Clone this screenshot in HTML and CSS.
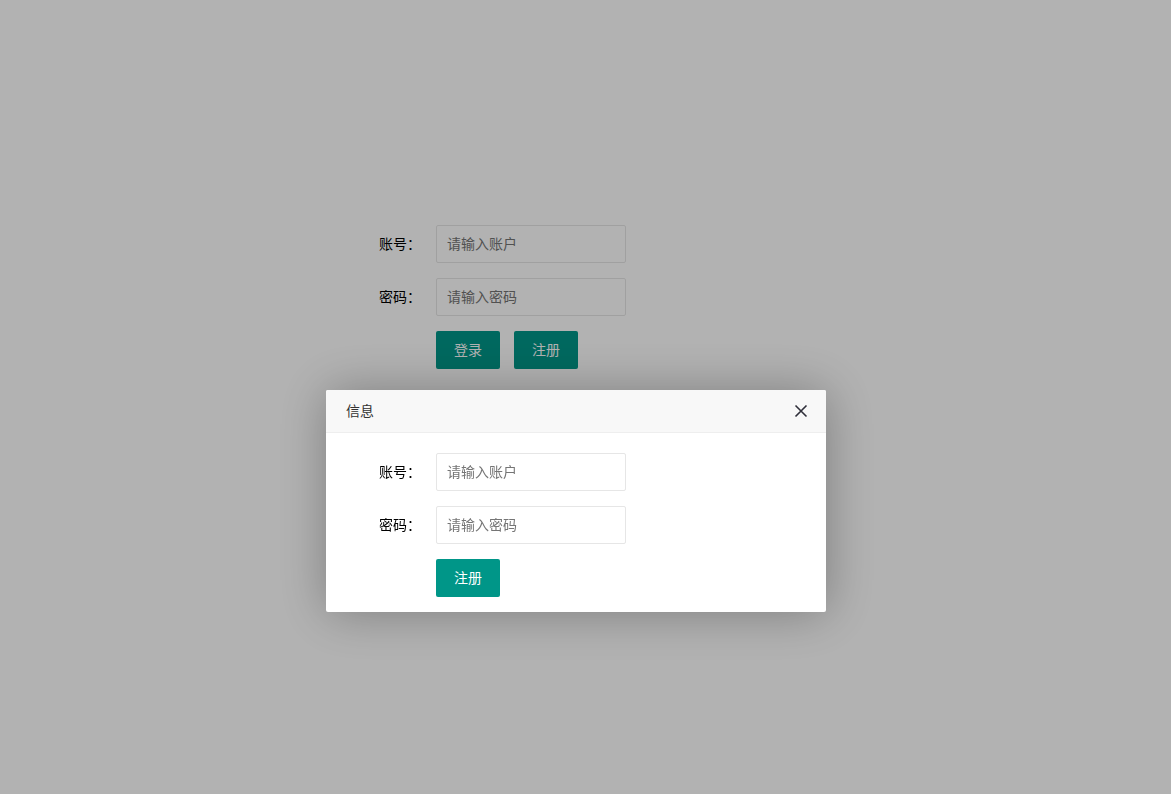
FILE: index.html
```html
<!DOCTYPE html>
<html lang="zh-CN">
<head>
    <meta charset="UTF-8">
    <meta name="viewport" content="width=device-width, initial-scale=1.0">
    <title>登录</title>
    <link rel="stylesheet" href="styles.css">
</head>
<body>
    <!-- Login form -->
    <form class="form page-form">
        <div class="form-item">
            <label class="form-label">账号：</label>
            <input class="form-input" type="text" placeholder="请输入账户">
        </div>
        <div class="form-item">
            <label class="form-label">密码：</label>
            <input class="form-input" type="password" placeholder="请输入密码">
        </div>
        <div class="form-item btn-row">
            <button type="button" class="btn">登录</button>
            <button type="button" class="btn">注册</button>
        </div>
    </form>

    <div class="shade"></div>

    <!-- Register dialog -->
    <div class="layer">
        <div class="layer-title">
            信息
            <span class="layer-close">
                <svg width="14" height="14" viewBox="0 0 14 14">
                    <path d="M1.5 1.5 L12.5 12.5 M12.5 1.5 L1.5 12.5" stroke="#2f2f3a" stroke-width="1.6" fill="none"/>
                </svg>
            </span>
        </div>
        <form class="form layer-content">
            <div class="form-item">
                <label class="form-label">账号：</label>
                <input class="form-input" type="text" placeholder="请输入账户">
            </div>
            <div class="form-item">
                <label class="form-label">密码：</label>
                <input class="form-input" type="password" placeholder="请输入密码">
            </div>
            <div class="form-item btn-row">
                <button type="button" class="btn">注册</button>
            </div>
        </form>
    </div>
</body>
</html>
```

FILE: styles.css
```css
html, body {
    margin: 0;
    padding: 0;
    height: 100%;
}
body {
    font-family: "Noto Sans CJK SC", "Noto Sans", sans-serif;
    font-size: 14px;
    color: #333;
    background-color: #fff;
}
.form {
    margin: 0;
}
.page-form {
    padding-top: 225px;
    margin-left: 326px;
}
.form-item {
    display: flex;
    align-items: center;
    height: 38px;
    margin-bottom: 15px;
}
.form-label {
    width: 80px;
    padding: 0 15px 2px;
    text-align: right;
    color: #000;
    line-height: 36px;
}
.form-input {
    box-sizing: border-box;
    width: 190px;
    height: 38px;
    padding: 0 0 2px 10px;
    border: 1px solid #e6e6e6;
    border-radius: 2px;
    background-color: #fff;
    font-family: inherit;
    font-size: 14px;
    color: #333;
    outline: none;
}
.form-input::placeholder {
    color: #757575;
}
.btn-row {
    padding-left: 110px;
    gap: 14px;
}
.btn {
    height: 38px;
    padding: 0 18px 2px;
    border: none;
    border-radius: 2px;
    background-color: #009688;
    color: #fff;
    font-family: inherit;
    font-size: 14px;
    cursor: pointer;
}
.shade {
    position: fixed;
    top: 0;
    left: 0;
    right: 0;
    bottom: 0;
    background-color: rgba(0, 0, 0, 0.3);
}
.layer {
    position: fixed;
    top: 390px;
    left: 326px;
    width: 500px;
    background-color: #fff;
    border-radius: 2px;
    box-shadow: 1px 1px 50px rgba(0, 0, 0, 0.3);
}
.layer-title {
    position: relative;
    height: 42px;
    line-height: 40px;
    padding: 0 80px 0 20px;
    border-bottom: 1px solid #eee;
    background-color: #f8f8f8;
    color: #333;
    border-radius: 2px 2px 0 0;
}
.layer-close {
    position: absolute;
    right: 18px;
    top: 14px;
    width: 14px;
    height: 14px;
    display: flex;
}
.layer-content {
    padding: 20px 0 0;
}
.layer-content .form-item:last-child {
    margin-bottom: 15px;
}
```
